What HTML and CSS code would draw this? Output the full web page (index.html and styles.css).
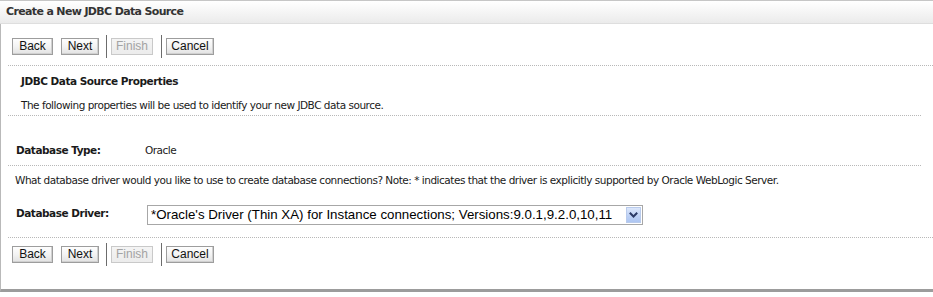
FILE: index.html
```html
<!DOCTYPE html>
<html>
<head>
<meta charset="utf-8">
<title>Create a New JDBC Data Source</title>
<link rel="stylesheet" href="styles.css">
</head>
<body>
<div class="panel">
  <div class="titlebar">Create a New JDBC Data Source</div>
  <div class="toolbar">
    <button class="btn btn-back">Back</button>
    <button class="btn btn-next">Next</button>
    <span class="sep"></span>
    <button class="btn btn-finish" disabled>Finish</button>
    <span class="sep sep-2"></span>
    <button class="btn btn-cancel">Cancel</button>
  </div>
  <div class="rule rule-full"></div>
  <div class="section-head">
    <div class="section-title">JDBC Data Source Properties</div>
    <div class="section-desc">The following properties will be used to identify your new JDBC data source.</div>
  </div>
  <div class="rule"></div>
  <div class="field field-type">
    <span class="label">Database Type:</span>
    <span class="value">Oracle</span>
  </div>
  <div class="rule rule-type"></div>
  <div class="note">What database driver would you like to use to create database connections? Note: * indicates that the driver is explicitly supported by Oracle WebLogic Server.</div>
  <div class="field field-driver">
    <span class="label label-driver">Database Driver:</span>
    <div class="select-wrap">
      <select class="select">
        <option>*Oracle's Driver (Thin XA) for Instance connections; Versions:9.0.1,9.2.0,10,11</option>
      </select>
      <span class="select-arrow">
        <svg width="9" height="6" viewBox="0 0 9 6"><path d="M0.8 0.8 L4.5 4.5 L8.2 0.8" fill="none" stroke="#2b3a66" stroke-width="2"/></svg>
      </span>
    </div>
  </div>
  <div class="rule rule-full"></div>
  <div class="toolbar toolbar-bottom">
    <button class="btn btn-back">Back</button>
    <button class="btn btn-next">Next</button>
    <span class="sep"></span>
    <button class="btn btn-finish" disabled>Finish</button>
    <span class="sep sep-2"></span>
    <button class="btn btn-cancel">Cancel</button>
  </div>
</div>
</body>
</html>
```

FILE: styles.css
```css
html, body {
  margin: 0;
  padding: 0;
  background: #fff;
}
body {
  font-family: "DejaVu Sans", Verdana, sans-serif;
  font-size: 10.5px;
  color: #1a1a1a;
  letter-spacing: -0.48px;
}
.panel {
  width: 933px;
  height: 292px;
  box-sizing: border-box;
  border-left: 1px solid #b9b9b9;
  border-bottom: 3px solid #9c9c9c;
  box-shadow: 0 1px 1px #cfcfcf;
}
.titlebar {
  height: 22px;
  line-height: 22px;
  border-top: 1px solid #c6c6c6;
  border-bottom: 1px solid #dedede;
  background: linear-gradient(#ffffff, #f7f7f7 40%, #ebebeb);
  padding-left: 6px;
  font-weight: bold;
  font-size: 11px;
  letter-spacing: -0.65px;
  color: #333;
  margin-left: -1px;
}
.toolbar {
  height: 41px;
  box-sizing: border-box;
  padding-top: 3px;
  display: flex;
  align-items: center;
  padding-left: 11px;
}
.toolbar-bottom {
  height: 33px;
  padding-top: 0;
}
.btn {
  height: 17px;
  padding: 0;
  margin: 0;
  font-family: "Liberation Sans", Arial, sans-serif;
  font-size: 12px;
  letter-spacing: 0;
  color: #111;
  border: 1px solid #9d9d9d;
  border-radius: 0;
  background: linear-gradient(#fefefe, #f3f3f3 50%, #e2e2e2);
  box-shadow: inset -1px -1px 0 #d0d0d0;
  line-height: 15px;
}
.btn-back { width: 41px; }
.btn-next { width: 38px; margin-left: 8px; }
.btn-finish {
  width: 42px;
  color: #a3a3a3;
  border-color: #c9c9c9;
  background: linear-gradient(#f4f4f4, #ececec);
  box-shadow: none;
}
.btn-cancel { width: 48px; }
.sep {
  width: 1px;
  height: 23px;
  background: #6c6c6c;
  margin: 0 4px 0 7px;
}
.sep-2 {
  margin-left: 8px;
}
.rule {
  height: 0;
  border-top: 1px dotted #b8b8b8;
  margin-left: 7px;
  margin-right: 12px;
}
.rule-full {
  margin-right: 0;
}
.section-head {
  height: 49px;
  padding-left: 20px;
}
.section-title {
  font-weight: bold;
  padding-top: 8px;
  height: 16px;
  line-height: 14px;
}
.section-desc {
  padding-top: 8px;
  line-height: 14px;
}
.field {
  display: flex;
  align-items: center;
  padding-left: 15px;
}
.field-type {
  height: 49px;
  padding-top: 19px;
  box-sizing: border-box;
}
.label {
  width: 129px;
  font-weight: bold;
  flex: none;
}
.label-driver {
  margin-bottom: 3px;
}
.note {
  padding-left: 14px;
  height: 14px;
  line-height: 14px;
  margin-top: 7px;
}
.field-driver {
  height: 25px;
  margin-top: 15px;
  margin-bottom: 10px;
}
.select-wrap {
  position: relative;
  width: 496px;
  height: 20px;
  margin-left: 2px;
}
.select {
  appearance: none;
  -webkit-appearance: none;
  width: 100%;
  height: 20px;
  box-sizing: border-box;
  margin: 0;
  border: 1px solid #a7a7a7;
  border-radius: 0;
  background: #fff;
  font-family: "Liberation Sans", Arial, sans-serif;
  font-size: 13.3px;
  letter-spacing: 0;
  color: #000;
  padding: 0 0 0 3px;
  line-height: 18px;
}
.select-arrow {
  position: absolute;
  right: 2px;
  top: 2px;
  width: 15px;
  height: 16px;
  box-sizing: border-box;
  border: 1px solid #b9cbec;
  background: linear-gradient(#dce7fb, #bcd0f5 60%, #aec6f2);
  display: flex;
  align-items: center;
  justify-content: center;
  pointer-events: none;
}
```
